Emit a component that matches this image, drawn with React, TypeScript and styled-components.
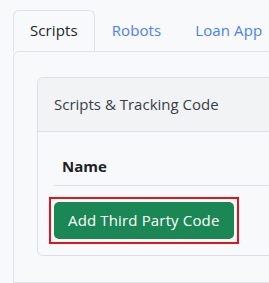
import { FC } from "react";
import styled, { createGlobalStyle } from "styled-components";

const GlobalStyle = createGlobalStyle`
  html, body {
    margin: 0;
    padding: 0;
    background: #f8f9fb;
    overflow: hidden;
  }
  body {
    font-family: "Open Sans", "Liberation Sans", sans-serif;
    color: #212529;
  }
`;

const tabs = ["Scripts", "Robots", "Loan App"];

const App: FC = () => {
  return (
    <>
      <GlobalStyle />
      <StPage>
        <StTabList>
          {tabs.map((t, i) => (
            <StTab key={t} $active={i === 0}>
              {t}
            </StTab>
          ))}
        </StTabList>
        <StPanel>
          <StCard>
            <StCardHeader>Scripts &amp; Tracking Code</StCardHeader>
            <StCardBody>
              <StTable>
                <thead>
                  <tr>
                    <StTh>Name</StTh>
                  </tr>
                </thead>
              </StTable>
              <StHighlight>
                <StAddButton>Add Third Party Code</StAddButton>
              </StHighlight>
            </StCardBody>
          </StCard>
        </StPanel>
      </StPage>
    </>
  );
};

export default App;

const StPage = styled.div`
  width: 340px;
  padding: 10px 0 0 13px;
  min-height: 283px;
  box-sizing: border-box;
  display: flex;
  flex-direction: column;
`;

const StTabList = styled.ul`
  display: flex;
  list-style: none;
  margin: 0 0 -1px;
  padding: 0;
  white-space: nowrap;
`;

const StTab = styled.li<{ $active: boolean }>`
  padding: 7px 16px 9px;
  line-height: 24px;
  font-size: 15px;
  letter-spacing: 0.1px;
  border: 1px solid ${(p) => (p.$active ? "#dfe2e6" : "transparent")};
  border-bottom-color: ${(p) => (p.$active ? "#f8f9fb" : "transparent")};
  border-radius: 6px 6px 0 0;
  color: ${(p) => (p.$active ? "#212529" : "#4a7ff7")};
  background: #f8f9fb;
`;

const StPanel = styled.div`
  flex: 1;
  border: 1px solid #dfe2e6;
  border-radius: 6px 0 0 0;
  padding: 25px 0 0 23px;
`;

const StCard = styled.div`
  border: 1px solid #dcdfe3;
  border-radius: 6px;
  background: #f8f9fb;
  overflow: hidden;
`;

const StCardHeader = styled.div`
  padding: 16px;
  line-height: 21px;
  font-size: 15px;
  color: #3a3f46;
  background: #f2f3f5;
  border-bottom: 1px solid #dcdfe3;
  white-space: nowrap;
`;

const StCardBody = styled.div`
  padding: 16px;
`;

const StTable = styled.table`
  width: 100%;
  border-collapse: collapse;
  margin-bottom: 11px;
`;

const StTh = styled.th`
  text-align: left;
  padding: 8px;
  line-height: 21px;
  font-size: 15px;
  font-weight: 700;
  color: #1d2125;
  border-bottom: 1px solid #dee2e6;
`;

const StHighlight = styled.div`
  width: fit-content;
  margin: 0 0 -5px -5px;
  padding: 3px;
  border: 2px solid #e3141b;
`;

const StAddButton = styled.button`
  display: block;
  font-family: inherit;
  font-size: 15px;
  letter-spacing: 0.15px;
  line-height: 21px;
  padding: 8px 14px;
  color: #fff;
  background: #1a8754;
  border: 0;
  border-radius: 5px;
`;
